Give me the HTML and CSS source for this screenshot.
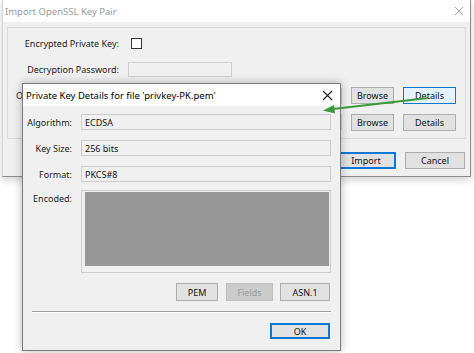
FILE: index.html
```html
<!DOCTYPE html>
<html>
<head>
<meta charset="utf-8">
<link rel="stylesheet" href="styles.css">
</head>
<body>
<div class="stage">
  <div class="win back">
    <div class="titlebar">
      <span class="title inactive">Import OpenSSL Key Pair</span>
      <svg class="close light" width="10" height="10" viewBox="0 0 10 10"><path d="M1 1L9 9M9 1L1 9" stroke="#a8a8a8" stroke-width="1" fill="none"/></svg>
    </div>
    <div class="wbody">
      <div class="group">
        <span class="lbl">Encrypted Private Key:</span>
        <span class="cell"><span class="chk"></span></span>
        <span></span><span></span>

        <span class="lbl">Decryption Password:</span>
        <span class="cell"><span class="input short"></span></span>
        <span></span><span></span>

        <span class="lbl left">OpenSSL Key File:</span>
        <span class="cell"><span class="input"></span></span>
        <button class="btn">Browse</button>
        <button class="btn focus">Details</button>

        <span class="lbl"></span>
        <span class="cell"><span class="input"></span></span>
        <button class="btn">Browse</button>
        <button class="btn">Details</button>
      </div>
      <div class="actions">
        <button class="btn wide default">Import</button>
        <button class="btn wide">Cancel</button>
      </div>
    </div>
  </div>

  <div class="win front">
    <div class="titlebar">
      <span class="title">Private Key Details for file 'privkey-PK.pem'</span>
      <svg class="close" width="11" height="11" viewBox="0 0 11 11"><path d="M1 1L10 10M10 1L1 10" stroke="#222" stroke-width="1.1" fill="none"/></svg>
    </div>
    <div class="dbody">
      <div class="fields">
        <span class="flbl">Algorithm:</span><span class="field">ECDSA</span>
        <span class="flbl">Key Size:</span><span class="field">256 bits</span>
        <span class="flbl">Format:</span><span class="field">PKCS#8</span>
        <span class="flbl top">Encoded:</span><span class="encoded"><span class="blob"></span></span>
      </div>
      <div class="btnrow">
        <button class="btn pem">PEM</button>
        <button class="btn fieldsbtn" disabled>Fields</button>
        <button class="btn asn">ASN.1</button>
      </div>
      <div class="sep"></div>
      <div class="okrow">
        <button class="btn ok">OK</button>
      </div>
    </div>
  </div>

  <svg class="arrow" width="474" height="353" viewBox="0 0 474 353">
    <line x1="428" y1="98" x2="333" y2="109" stroke="#3a9a3a" stroke-width="2"/>
    <polygon points="323,110.5 334,105 335,113.5" fill="#3a9a3a"/>
  </svg>
</div>
</body>
</html>
```

FILE: styles.css
```css
* { box-sizing: border-box; }
html, body { margin: 0; padding: 0; background: #fff; }
body {
  font-family: "Noto Sans", "Open Sans", sans-serif;
  font-size: 9px;
  color: #000;
}
.stage {
  position: relative;
  width: 474px;
  height: 353px;
  overflow: hidden;
}
.win {
  position: absolute;
  display: flex;
  flex-direction: column;
}
.back {
  left: 2px;
  top: 0;
  width: 469px;
  height: 177px;
  border-left: 1px solid #d4d4d4;
  border-right: 1px solid #8c8c8c;
  border-bottom: 1px solid #8c8c8c;
  background: #f0f0f0;
  box-shadow: 0 3px 8px rgba(0,0,0,0.18);
}
.titlebar {
  height: 22px;
  flex: none;
  background: #fff;
  display: flex;
  align-items: center;
  justify-content: space-between;
}
.back .titlebar { padding: 0 6px 0 2px; height: 22px; }
.title { font-size: 9.5px; white-space: nowrap; }
.title.inactive { color: #9a9a9a; }
.wbody {
  flex: 1;
  background: #f0f0f0;
  padding-top: 5px;
}
.group {
  margin-left: 4px;
  width: 459px;
  height: 112px;
  border: 1px solid #dadada;
  padding: 2px 9px 0 0;
  display: grid;
  grid-template-columns: 111px 1fr 43px 53px;
  grid-template-rows: 26px 26px 27px 26px;
  column-gap: 9px;
  align-items: center;
}
.lbl {
  text-align: right;
  white-space: nowrap;
  color: #1a1a1a;
}
.lbl.left { text-align: left; padding-left: 8px; }
.cell { display: flex; align-items: center; }
.chk {
  width: 11px;
  height: 11px;
  margin-left: 3px;
  border: 1px solid #333;
  background: #fff;
}
.input {
  display: block;
  width: 100%;
  height: 16px;
  border: 1px solid #cfcfcf;
  background: #f0f0f0;
}
.input.short { width: 104px; height: 15px; }
.btn {
  font-family: inherit;
  font-size: 9px;
  color: #111;
  height: 17px;
  padding: 0;
  background: #e1e1e1;
  border: 1px solid #adadad;
  border-radius: 0;
  display: flex;
  align-items: center;
  justify-content: center;
}
.btn.focus {
  background: #e5f1fb;
  border-color: #0a78d4;
}
.actions {
  display: flex;
  justify-content: flex-end;
  gap: 9px;
  margin-top: 13px;
  padding-right: 5px;
}
.btn.wide { width: 60px; height: 17px; }
.btn.default { border: 1px solid #0a78d4; box-shadow: inset 0 0 0 1px #0a78d4; }

.front {
  left: 22px;
  top: 83px;
  width: 319px;
  height: 268px;
  border: 1px solid #7c7c7c;
  background: #f0f0f0;
  box-shadow: 0 0 9px rgba(0,0,0,0.28);
}
.front .titlebar { padding: 0 7px 0 3px; height: 22px; }
.front .title { font-size: 9.5px; color: #000; }
.dbody {
  flex: 1;
  padding: 8px 9px 0 9px;
  display: flex;
  flex-direction: column;
}
.fields {
  display: grid;
  grid-template-columns: 52px 1fr;
  grid-template-rows: 16px 16px 16px 83px;
  column-gap: 9px;
  row-gap: 10px;
  align-items: center;
  margin-left: -12px;
}
.flbl {
  text-align: right;
  white-space: nowrap;
  color: #1a1a1a;
}
.flbl.top { align-self: start; padding-top: 2px; margin-top: -2px; }
.field {
  height: 16px;
  border: 1px solid #cdcdcd;
  background: #f0f0f0;
  padding-left: 3px;
  display: flex;
  align-items: center;
  color: #111;
}
.encoded {
  height: 83px;
  margin-top: -2px;
  align-self: start;
  border: 1px solid #cdcdcd;
  background: #f0f0f0;
  padding: 1px 1px 6px 3px;
  display: flex;
}
.blob {
  flex: 1;
  background: #979797;
}
.btnrow {
  display: flex;
  justify-content: flex-end;
  margin-top: 8px;
  padding-right: 1px;
}
.btn.pem { width: 42px; height: 18px; margin-right: 8px; }
.btn.fieldsbtn { width: 47px; height: 18px; margin-right: 7px; background: #cccccc; border-color: #bfbfbf; color: #9a9a9a; }
.btn.asn { width: 50px; height: 18px; }
.sep {
  margin-top: 10px;
  height: 2px;
  border-top: 1px solid #a0a0a0;
  border-bottom: 1px solid #fff;
}
.okrow {
  display: flex;
  justify-content: flex-end;
  margin-top: 10px;
  padding-right: 1px;
}
.btn.ok {
  width: 60px;
  height: 16px;
  border: 1px solid #0a78d4;
  box-shadow: inset 0 0 0 1px #0a78d4;
}
.arrow {
  position: absolute;
  left: 0;
  top: 0;
  pointer-events: none;
}
```
